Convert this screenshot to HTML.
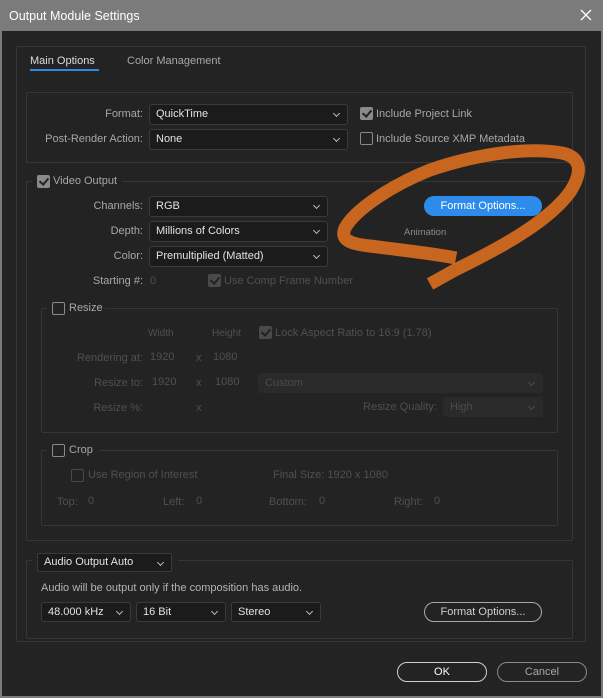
<!DOCTYPE html>
<html><head><meta charset="utf-8"><style>
*{box-sizing:border-box;margin:0;padding:0}
body{width:603px;height:698px;background:#7b7b7b;font-family:"Liberation Sans",sans-serif;font-size:11px;color:#a8a8a8;position:relative;overflow:hidden}
.win{position:absolute;left:2px;top:31px;width:599px;height:665px;background:#232323}
.a{position:absolute;white-space:nowrap;line-height:14px}
.box{position:absolute;border:1px solid #363636;border-radius:2px}
.sel{position:absolute;background:#1b1b1b;border:1px solid #3a3a3a;border-radius:3px;color:#e2e2e2;padding-left:6px;line-height:19px;height:21px}
.sel:after{content:"";position:absolute;right:8px;top:6px;width:4px;height:4px;border-right:1px solid #bbb;border-bottom:1px solid #bbb;transform:rotate(45deg)}
.dis{background:#2a2a2a;border-color:#2a2a2a;color:#4c4c4c}
.dis:after{border-color:#4c4c4c}
.cb{position:absolute;width:13px;height:13px;border:1.5px solid #8a8a8a;border-radius:2px}
.cb.on{background:#8a8a8a}
.cb.on:after{content:"";position:absolute;left:3px;top:0px;width:4px;height:7px;border-right:2px solid #222;border-bottom:2px solid #222;transform:rotate(40deg)}
.cb.d{border-color:#4a4a4a}
.cb.d.on{background:#4a4a4a}
.d5{color:#505050}
.btn{position:absolute;border:1px solid #a8a8a8;border-radius:11px;text-align:center;line-height:18px;height:20px;color:#cfcfcf}
.r{text-align:right}
</style></head><body>
<div class="a" style="left:9px;top:8px;color:#fff;font-size:12.5px;line-height:16px">Output Module Settings</div>
<svg style="position:absolute;left:580px;top:9px" width="12" height="12"><path d="M1,1 L11,11 M11,1 L1,11" stroke="#fff" stroke-width="1.3"/></svg>
<div class="win"></div>

<div class="box" style="left:16px;top:46px;width:570px;height:596px"></div>
<div class="a" style="left:30px;top:54px;color:#dcdcdc">Main Options</div>
<div style="position:absolute;left:30px;top:69px;width:69px;height:2px;background:#2f88e6"></div>
<div class="a" style="left:127px;top:54px">Color Management</div>

<div class="box" style="left:26px;top:92px;width:547px;height:71px"></div>
<div class="a r" style="left:40px;top:107px;width:103px">Format:</div>
<div class="sel" style="left:149px;top:104px;width:199px">QuickTime</div>
<div class="cb on" style="left:360px;top:107px"></div>
<div class="a" style="left:376px;top:107px">Include Project Link</div>
<div class="a r" style="left:30px;top:132px;width:113px">Post-Render Action:</div>
<div class="sel" style="left:149px;top:129px;width:199px">None</div>
<div class="cb" style="left:360px;top:132px"></div>
<div class="a" style="left:376px;top:132px">Include Source XMP Metadata</div>

<div class="box" style="left:26px;top:181px;width:547px;height:360px"></div>
<div style="position:absolute;left:32px;top:174px;width:90px;height:14px;background:#232323"></div>
<div class="cb on" style="left:37px;top:175px"></div>
<div class="a" style="left:53px;top:174px">Video Output</div>
<div class="a r" style="left:40px;top:199px;width:103px">Channels:</div>
<div class="sel" style="left:149px;top:196px;width:179px">RGB</div>
<div class="a r" style="left:40px;top:224px;width:103px">Depth:</div>
<div class="sel" style="left:149px;top:221px;width:179px">Millions of Colors</div>
<div class="a r" style="left:40px;top:249px;width:103px">Color:</div>
<div class="sel" style="left:149px;top:246px;width:179px">Premultiplied (Matted)</div>
<div class="a r" style="left:40px;top:274px;width:103px">Starting #:</div>
<div class="a d5" style="left:150px;top:274px">0</div>
<div class="cb d on" style="left:208px;top:274px"></div>
<div class="a d5" style="left:224px;top:274px">Use Comp Frame Number</div>
<div style="position:absolute;left:424px;top:196px;width:118px;height:20px;border-radius:10px;background:#2d8ceb;color:#fff;text-align:center;line-height:20px">Format Options...</div>
<div class="a" style="left:404px;top:226px;font-size:9.5px;color:#8c8c8c">Animation</div>

<div class="box" style="left:41px;top:308px;width:517px;height:125px"></div>
<div style="position:absolute;left:47px;top:301px;width:58px;height:14px;background:#232323"></div>
<div class="cb" style="left:52px;top:302px"></div>
<div class="a" style="left:69px;top:301px">Resize</div>
<div class="a d5" style="left:148px;top:327px;font-size:10px">Width</div>
<div class="a d5" style="left:212px;top:327px;font-size:10px">Height</div>
<div class="cb d on" style="left:259px;top:326px"></div>
<div class="a d5" style="left:275px;top:326px">Lock Aspect Ratio to 16:9 (1.78)</div>
<div class="a d5 r" style="left:40px;top:351px;width:103px">Rendering at:</div>
<div class="a d5" style="left:150px;top:350px">1920</div><div class="a d5" style="left:196px;top:351px">x</div><div class="a d5" style="left:213px;top:350px">1080</div>
<div class="a d5 r" style="left:40px;top:376px;width:103px">Resize to:</div>
<div class="a d5" style="left:152px;top:375px">1920</div><div class="a d5" style="left:196px;top:376px">x</div><div class="a d5" style="left:215px;top:375px">1080</div>
<div class="sel dis" style="left:258px;top:373px;width:285px;height:20px;line-height:18px">Custom</div>
<div class="a d5 r" style="left:40px;top:401px;width:103px">Resize %:</div>
<div class="a d5" style="left:196px;top:401px">x</div>
<div class="a d5 r" style="left:330px;top:400px;width:107px">Resize Quality:</div>
<div class="sel dis" style="left:443px;top:397px;width:100px;height:20px;line-height:18px">High</div>

<div class="box" style="left:41px;top:450px;width:517px;height:76px"></div>
<div style="position:absolute;left:47px;top:443px;width:52px;height:14px;background:#232323"></div>
<div class="cb" style="left:52px;top:444px"></div>
<div class="a" style="left:69px;top:443px">Crop</div>
<div class="cb d" style="left:71px;top:469px"></div>
<div class="a d5" style="left:88px;top:468px">Use Region of Interest</div>
<div class="a d5" style="left:273px;top:468px">Final Size: 1920 x 1080</div>
<div class="a d5" style="left:57px;top:495px">Top:</div><div class="a d5" style="left:88px;top:494px">0</div>
<div class="a d5" style="left:163px;top:495px">Left:</div><div class="a d5" style="left:196px;top:494px">0</div>
<div class="a d5" style="left:269px;top:495px">Bottom:</div><div class="a d5" style="left:319px;top:494px">0</div>
<div class="a d5" style="left:394px;top:495px">Right:</div><div class="a d5" style="left:434px;top:494px">0</div>

<div class="box" style="left:26px;top:560px;width:547px;height:79px"></div>
<div style="position:absolute;left:32px;top:552px;width:146px;height:20px;background:#232323"></div>
<div class="sel" style="left:37px;top:553px;width:135px;height:19px;line-height:17px;border-radius:2px">Audio Output Auto</div>
<div class="a" style="left:41px;top:581px;color:#b4b4b4">Audio will be output only if the composition has audio.</div>
<div class="sel" style="left:41px;top:602px;width:90px;height:20px;line-height:18px">48.000 kHz</div>
<div class="sel" style="left:136px;top:602px;width:90px;height:20px;line-height:18px">16 Bit</div>
<div class="sel" style="left:231px;top:602px;width:90px;height:20px;line-height:18px">Stereo</div>
<div class="btn" style="left:424px;top:602px;width:118px">Format Options...</div>

<div class="btn" style="left:397px;top:662px;width:90px;color:#fff;border-color:#d0d0d0">OK</div>
<div class="btn" style="left:497px;top:662px;width:90px;border-color:#8a8a8a;color:#a8a8a8">Cancel</div>

<svg style="position:absolute;left:0;top:0" width="603" height="698">
<path d="M430,284 L455,270 C500,248 548,222 570,192 C584,170 580,157 562,153 C530,147 480,153 430,170 C390,186 355,210 345,228 C340,240 350,244 370,246 C400,250 430,253 456,258" fill="none" stroke="#c8661f" stroke-width="13" stroke-linejoin="round"/>
</svg>
</body></html>
